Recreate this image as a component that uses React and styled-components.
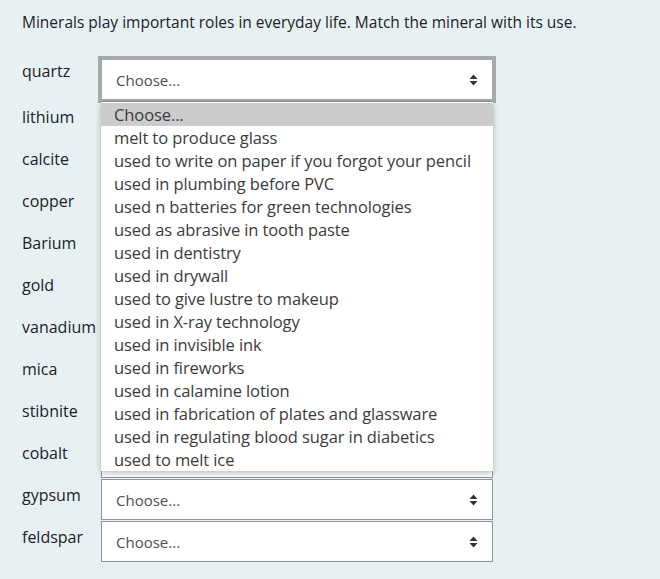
import React from "react";
import styled, { createGlobalStyle } from "styled-components";

const GlobalStyle = createGlobalStyle`
  html, body {
    margin: 0;
    background: #e7f1f4;
  }
  body {
    font-family: "Open Sans", "Noto Sans", sans-serif;
    color: #1d2125;
  }
`;

const Page = styled.div`
  padding: 11px 22px 0 22px;
  width: 660px;
  height: 579px;
  box-sizing: border-box;
`;

const Title = styled.p`
  margin: 0 0 26px 0;
  font-size: 15.5px;
  line-height: 22px;
`;

const Rows = styled.div`
  display: flex;
  flex-direction: column;
  gap: 1px;
`;

const Row = styled.div`
  position: relative;
  display: grid;
  grid-template-columns: 79px 392px;
  align-items: start;
`;

const Label = styled.div`
  font-size: 16px;
  line-height: 22px;
  padding-top: ${(p) => (p.focused ? "1px" : "5px")};
`;

const Select = styled.div`
  height: 41px;
  box-sizing: border-box;
  border: 1px solid #8f959e;
  background: #fff;
  display: flex;
  align-items: center;
  justify-content: space-between;
  padding: 0 14px 0 14px;
  font-size: 15px;
  color: #495057;
  box-shadow: ${(p) => (p.focused ? "0 0 0 3px #a5a9ac" : "none")};
  border-color: ${(p) => (p.focused ? "#a5a9ac" : "#8f959e")};
`;

const Menu = styled.ul`
  position: absolute;
  left: 79px;
  top: 43px;
  width: 392px;
  margin: 0;
  padding: 1px 0 0 0;
  list-style: none;
  background: #fff;
  box-shadow: 0 2px 6px rgba(0, 0, 0, 0.28);
  z-index: 5;
`;

const Option = styled.li`
  height: 23px;
  line-height: 23px;
  padding-left: 13px;
  font-size: 16.5px;
  color: #3b3b3b;
  letter-spacing: -0.1px;
  background: ${(p) => (p.active ? "#cccccc" : "transparent")};
  white-space: nowrap;
`;

function Arrows() {
  return (
    <svg width="9" height="12" viewBox="0 0 9 12">
      <path d="M4.5 0.5 L8.5 5 L0.5 5 Z" fill="#333" />
      <path d="M4.5 11.5 L8.5 7 L0.5 7 Z" fill="#333" />
    </svg>
  );
}

const minerals = [
  "quartz",
  "lithium",
  "calcite",
  "copper",
  "Barium",
  "gold",
  "vanadium",
  "mica",
  "stibnite",
  "cobalt",
  "gypsum",
  "feldspar",
];

const uses = [
  "Choose...",
  "melt to produce glass",
  "used to write on paper if you forgot your pencil",
  "used in plumbing before PVC",
  "used n batteries for green technologies",
  "used as abrasive in tooth paste",
  "used in dentistry",
  "used in drywall",
  "used to give lustre to makeup",
  "used in X-ray technology",
  "used in invisible ink",
  "used in fireworks",
  "used in calamine lotion",
  "used in fabrication of plates and glassware",
  "used in regulating blood sugar in diabetics",
  "used to melt ice",
];

export default function App() {
  return (
    <Page>
      <GlobalStyle />
      <Title>
        Minerals play important roles in everyday life. Match the mineral with its use.
      </Title>
      <Rows>
        {minerals.map((m, i) => (
          <Row key={m}>
            <Label focused={i === 0}>{m}</Label>
            <Select focused={i === 0}>
              <span>Choose...</span>
              <Arrows />
            </Select>
            {i === 0 && (
              <Menu>
                {uses.map((u, j) => (
                  <Option key={u} active={j === 0}>
                    {u}
                  </Option>
                ))}
              </Menu>
            )}
          </Row>
        ))}
      </Rows>
    </Page>
  );
}
